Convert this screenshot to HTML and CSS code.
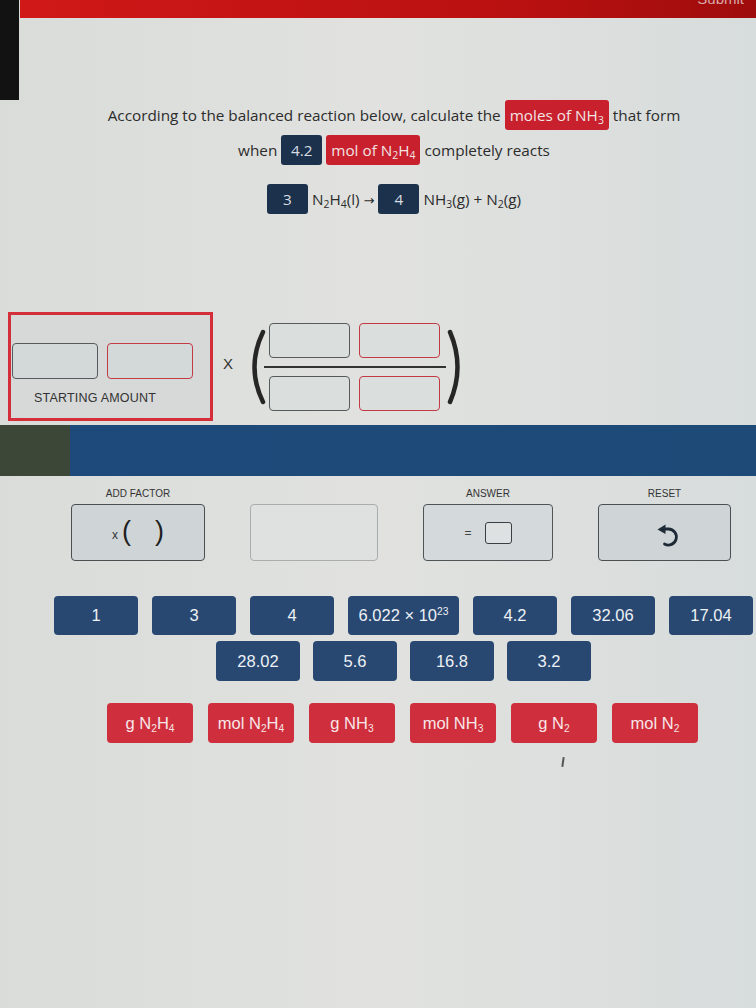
FILE: index.html
```html
<!DOCTYPE html>
<html>
<head>
<meta charset="utf-8">
<link rel="stylesheet" href="styles.css">
</head>
<body>
<div class="screen">
  <div class="hdr"><span class="submit">Submit</span></div>

  <div class="question">
    <p class="line l1">According to the balanced reaction below, calculate the <span class="badge red">moles of NH<sub>3</sub></span> that form</p>
    <p class="line l2">when <span class="badge navy num">4.2</span> <span class="badge red">mol of N<sub>2</sub>H<sub>4</sub></span> completely reacts</p>
    <p class="line l3"><span class="badge navy num">3</span> N<sub>2</sub>H<sub>4</sub>(l) <span class="arrow">→</span> <span class="badge navy num">4</span> NH<sub>3</sub>(g) + N<sub>2</sub>(g)</p>
  </div>

  <div class="workspace">
    <div class="start">
      <div class="start-row">
        <div class="slot"></div>
        <div class="slot redslot"></div>
      </div>
      <div class="start-label">STARTING AMOUNT</div>
    </div>
    <div class="times">X</div>
    <svg class="paren" width="22" height="76" viewBox="0 0 22 76"><path d="M18 3 Q1 38 18 73" fill="none" stroke="#262626" stroke-width="4.5" stroke-linecap="round"/></svg>
    <div class="fraction">
      <div class="frow">
        <div class="fslot"></div>
        <div class="fslot redslot"></div>
      </div>
      <div class="fline"></div>
      <div class="frow">
        <div class="fslot"></div>
        <div class="fslot redslot"></div>
      </div>
    </div>
    <svg class="paren rp" width="18" height="76" viewBox="0 0 18 76"><path d="M3 3 Q18 38 3 73" fill="none" stroke="#262626" stroke-width="4.5" stroke-linecap="round"/></svg>
  </div>

  <div class="band"></div>

  <div class="tools">
    <div class="tool">
      <div class="tlabel">ADD FACTOR</div>
      <div class="tbox dark">
        <span class="tx">x</span><span class="tp">(</span><span class="tp gap">)</span>
      </div>
    </div>
    <div class="tool">
      <div class="tlabel"></div>
      <div class="tbox light"></div>
    </div>
    <div class="tool">
      <div class="tlabel">ANSWER</div>
      <div class="tbox mid">
        <span class="eq">=</span><span class="ansbox"></span>
      </div>
    </div>
    <div class="tool">
      <div class="tlabel">RESET</div>
      <div class="tbox dark">
        <svg class="reset" width="30" height="30" viewBox="0 0 30 30"><path d="M11 8 H15.5 A8 8 0 1 1 11.5 23" fill="none" stroke="#1e2a36" stroke-width="2.8" stroke-linecap="round"/><path d="M4.5 8.5 L12.5 3.5 L12.5 13 Z" fill="#1e2a36"/></svg>
      </div>
    </div>
  </div>

  <div class="tiles r1">
    <div class="tile navy"><span>1</span></div>
    <div class="tile navy"><span>3</span></div>
    <div class="tile navy"><span>4</span></div>
    <div class="tile navy wide"><span>6.022 × 10<sup>23</sup></span></div>
    <div class="tile navy"><span>4.2</span></div>
    <div class="tile navy"><span>32.06</span></div>
    <div class="tile navy"><span>17.04</span></div>
  </div>
  <div class="tiles r2">
    <div class="tile navy"><span>28.02</span></div>
    <div class="tile navy"><span>5.6</span></div>
    <div class="tile navy"><span>16.8</span></div>
    <div class="tile navy"><span>3.2</span></div>
  </div>
  <div class="tiles r3">
    <div class="tile red"><span>g N<sub>2</sub>H<sub>4</sub></span></div>
    <div class="tile red"><span>mol N<sub>2</sub>H<sub>4</sub></span></div>
    <div class="tile red"><span>g NH<sub>3</sub></span></div>
    <div class="tile red"><span>mol NH<sub>3</sub></span></div>
    <div class="tile red"><span>g N<sub>2</sub></span></div>
    <div class="tile red"><span>mol N<sub>2</sub></span></div>
  </div>
  <div class="mark"></div>
</div>
</body>
</html>
```

FILE: styles.css
```css
* { box-sizing: border-box; }
html, body { margin: 0; padding: 0; }
body {
  width: 756px;
  height: 1008px;
  overflow: hidden;
  background: #dcdfdc;
  font-family: "Liberation Sans", Arial, sans-serif;
}
.screen {
  width: 756px;
  height: 1008px;
  overflow: hidden;
  background:
    linear-gradient(to right, #121212 0, #121212 19px, transparent 19px) no-repeat 0 0 / 100% 100px,
    linear-gradient(to right, #d9dcd9, #e1e2df 50%, #d7dcdc);
}
.hdr {
  margin-left: 20px;
  height: 18px;
  background: linear-gradient(to right, #d01818, #b81010 70%, #9e0c0c);
  overflow: hidden;
  display: flex;
  justify-content: flex-end;
  align-items: flex-start;
  padding-right: 12px;
}
.submit {
  color: #d9a8a8;
  font-size: 15px;
  line-height: 18px;
  margin-top: -10px;
}

/* question */
.question {
  padding-left: 32px;
  font-family: "Open Sans", sans-serif;
  font-size: 15.3px;
  color: #2c2c2c;
  text-align: center;
}
.line {
  margin: 0;
  height: 30px;
  line-height: 30px;
  white-space: nowrap;
}
.l1 { margin-top: 82px; }
.l2 { margin-top: 5px; }
.l3 { margin-top: 19px; }
.arrow { font-family: "DejaVu Sans", sans-serif; font-size: 13px; }
.badge {
  display: inline-block;
  height: 30px;
  line-height: 30px;
  padding: 0 5px;
  border-radius: 3px;
  color: #f1e4e4;
  vertical-align: top;
}
.badge.red { background: #c8202c; }
.badge.navy { background: #1c314b; color: #d8dde4; }
.badge.num { min-width: 41px; text-align: center; }
sub { font-size: 0.68em; vertical-align: -0.25em; line-height: 0; }
sup { font-size: 0.68em; vertical-align: 0.55em; line-height: 0; }

/* workspace */
.workspace {
  margin-top: 98px;
  height: 109px;
  display: flex;
  align-items: center;
}
.start {
  margin-left: 8px;
  width: 205px;
  height: 109px;
  border: 3px solid #d42e3a;
  padding: 28px 0 0 1px;
  background: #d6d9d8;
}
.start-row { display: flex; gap: 9px; }
.slot {
  width: 86px;
  height: 36px;
  border: 1px solid #555a5c;
  border-radius: 4px;
  background: #d3d8d9;
}
.redslot { border-color: #c23a44; }
.start-label {
  margin-top: 12px;
  padding-left: 22px;
  font-size: 12.5px;
  color: #333;
  letter-spacing: 0.2px;
}
.times {
  margin-left: 10px;
  width: 22px;
  font-size: 15px;
  color: #333;
  margin-top: -6px;
}
.paren { margin-left: 0; flex: none; }
.fraction {
  margin-left: -3px;
  width: 182px;
  height: 88px;
  display: flex;
  flex-direction: column;
}
.frow { display: flex; gap: 9px; padding-left: 5px; }
.fslot {
  width: 81px;
  height: 35px;
  border: 1px solid #555a5c;
  border-radius: 4px;
  background: #dadedd;
}
.fslot.redslot { border-color: #c23a44; }
.frow + .fline { margin-top: 8px; }
.fline { height: 3px; background: #333; margin-bottom: 8px; }
.rp { margin-left: 1px; }

/* band */
.band {
  margin-top: 4px;
  height: 51px;
  background: linear-gradient(to right, #3c4738 0, #3c4738 70px, #1d4a7a 70px, #1e4a78);
}

/* tools */
.tools {
  margin-top: 12px;
  padding-left: 71px;
  display: grid;
  grid-template-columns: 134px 128px 130px 133px;
  column-gap: 45px;
}
.tlabel {
  height: 12px;
  font-size: 10px;
  line-height: 12px;
  color: #333;
  text-align: center;
}
.tbox {
  margin-top: 4px;
  height: 57px;
  border-radius: 4px;
  display: flex;
  align-items: center;
  justify-content: center;
}
.tbox.dark { background: #cfd5d7; border: 1px solid #4a4f52; }
.tbox.light { background: #dfe1e1; border: 1px solid #a9adae; }
.tbox.mid { background: #d4d9db; border: 1px solid #4f5457; }
.tx { font-size: 12px; color: #333; margin-right: 4px; margin-top: 4px; }
.tp { font-size: 27px; color: #1f1f1f; font-family: "Liberation Sans", sans-serif; line-height: 1; margin-top: -2px; }
.tp.gap { margin-left: 24px; }
.eq { font-size: 12px; color: #444; margin-right: 13px; }
.ansbox {
  width: 27px;
  height: 22px;
  border: 1.5px solid #3a3f42;
  border-radius: 3px;
  background: #dde1e2;
}
.reset { margin-top: 6px; margin-left: 6px; }

/* tiles */
.tiles { display: flex; }
.r1 { margin-top: 35px; padding-left: 54px; gap: 14px; }
.r2 { margin-top: 6px; padding-left: 216px; gap: 13px; }
.r3 { margin-top: 22px; padding-left: 107px; gap: 15px; }
.tile {
  width: 84px;
  height: 39px;
  border-radius: 4px;
  display: flex;
  align-items: center;
  justify-content: center;
  font-size: 16.5px;
  color: #eef1f5;
  white-space: nowrap;
}
.tile sub { font-size: 0.62em; vertical-align: -0.3em; }
.tile sup { font-size: 0.62em; vertical-align: 0.6em; }
.r2 .tile, .r3 .tile { height: 40px; }
.r3 .tile { width: 86px; }
.tile.navy { background: #284872; }
.tile.wide { width: 111px; }
.tile.red { background: #cf2e3c; color: #f7e6e8; }
.mark {
  margin-top: 14px;
  margin-left: 562px;
  width: 2px;
  height: 10px;
  background: #555;
  transform: rotate(8deg);
}
```
